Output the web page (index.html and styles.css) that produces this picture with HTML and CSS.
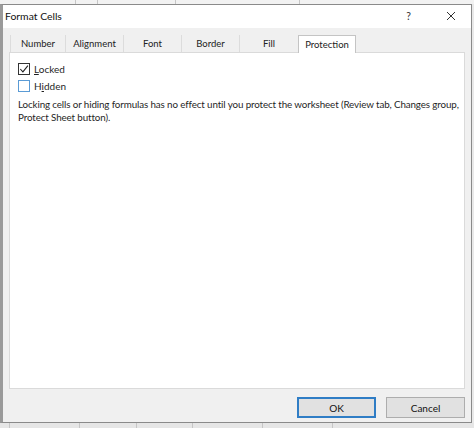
FILE: index.html
```html
<!DOCTYPE html>
<html>
<head>
<meta charset="utf-8">
<title>Format Cells</title>
<link rel="stylesheet" href="styles.css">
</head>
<body>
<div class="sheet-strip top">
  <span class="cell" style="width:76px"></span>
  <span class="cell" style="width:22px"></span>
  <span class="cell" style="width:78px"></span>
  <span class="cell" style="width:124px"></span>
</div>
<div class="dialog">
  <div class="titlebar">
    <span class="title">Format Cells</span>
    <div class="title-actions">
      <span class="help">?</span>
      <svg class="close" width="10" height="10" viewBox="0 0 10 10"><path d="M1 1 L9 9 M9 1 L1 9" stroke="#333" stroke-width="1" fill="none"/></svg>
    </div>
  </div>
  <div class="body">
    <div class="tabs">
      <span class="tab">Number</span>
      <span class="tab">Alignment</span>
      <span class="tab">Font</span>
      <span class="tab">Border</span>
      <span class="tab">Fill</span>
      <span class="tab active">Protection</span>
    </div>
    <div class="panel">
      <label class="check-row">
        <span class="box checked"><svg width="10" height="10" viewBox="0 0 10 10"><path d="M1.3 5 L3.9 7.8 L8.9 1.6" stroke="#222" stroke-width="1.1" fill="none"/></svg></span>
        <span><u>L</u>ocked</span>
      </label>
      <label class="check-row">
        <span class="box focus"></span>
        <span>H<u>i</u>dden</span>
      </label>
      <p class="note">Locking cells or hiding formulas has no effect until you protect the worksheet (Review tab, Changes group,<br>Protect Sheet button).</p>
    </div>
    <div class="footer">
      <button class="btn default">OK</button>
      <button class="btn">Cancel</button>
    </div>
  </div>
</div>
<div class="sheet-strip bottom">
  <span class="cell" style="width:10px"></span>
  <span class="cell" style="width:70px"></span>
  <span class="cell" style="width:57px"></span>
  <span class="cell" style="width:56px"></span>
  <span class="cell" style="width:70px"></span>
  <span class="cell" style="width:70px"></span>
</div>
</body>
</html>
```

FILE: styles.css
```css
* { box-sizing: border-box; }
html, body {
  margin: 0;
  padding: 0;
  width: 474px;
  height: 428px;
  overflow: hidden;
  background: #e9e9e9;
  font-family: Lato, "Noto Sans", sans-serif;
  font-size: 10px;
  color: #1f1f1f;
}
.sheet-strip {
  display: flex;
  height: 4px;
  background: #f2f2f2;
}
.sheet-strip.bottom { height: 6px; background: #e6e6e6; }
.cell {
  display: block;
  height: 100%;
  border-right: 1px solid #c6c6c6;
}
.dialog {
  width: 472px;
  height: 419px;
  border: 1px solid #8a8a8a;
  border-left: 3px solid #9a9a9a;
  background: #f0f0f0;
  display: flex;
  flex-direction: column;
}
.titlebar {
  height: 23px;
  background: #ffffff;
  display: flex;
  align-items: center;
  justify-content: space-between;
  padding: 0 15px 2px 2px;
}
.title {
  font-size: 10.4px;
  color: #111;
}
.title-actions {
  display: flex;
  align-items: center;
  gap: 35px;
}
.help {
  font-size: 10.5px;
  color: #333;
}
.close { display: block; }
.body {
  flex: 1;
  display: flex;
  flex-direction: column;
  padding: 6px 6px 0 6px;
}
.tabs {
  display: flex;
  align-items: flex-end;
  height: 18px;
  padding-left: 1px;
}
.tab {
  width: 58px;
  height: 17px;
  display: flex;
  align-items: center;
  justify-content: center;
  border-right: 1px solid #dcdcdc;
  font-size: 9.5px;
  color: #222;
}
.tab:first-child { width: 56px; border-left: 1px solid #dcdcdc; }
.tab:nth-child(5) { border-right: none; }
.tab.active {
  height: 18px;
  background: #fff;
  border: 1px solid #c4c4c4;
  border-bottom: none;
  position: relative;
  top: 1px;
  z-index: 1;
}
.panel {
  height: 337px;
  background: #ffffff;
  border: 1px solid #dadada;
  padding: 10px 4px 0 8px;
}
.check-row {
  display: flex;
  align-items: center;
  gap: 4px;
  height: 12px;
  margin-bottom: 5px;
  font-size: 10px;
}
.check-row u { text-decoration-thickness: 1px; text-underline-offset: 1px; }
.box {
  width: 12px;
  height: 12px;
  border: 1px solid #333;
  background: #fff;
  display: flex;
  align-items: center;
  justify-content: center;
}
.box.focus { border-color: #5b9bd5; }
.note {
  margin: 6px 0 0 0;
  font-size: 9.8px;
  letter-spacing: -0.12px;
  line-height: 13px;
  white-space: nowrap;
  color: #1f1f1f;
}
.footer {
  display: flex;
  justify-content: flex-end;
  gap: 10px;
  padding-top: 8px;
}
.btn {
  width: 79px;
  height: 21px;
  background: #e1e1e1;
  border: 1px solid #adadad;
  font-family: inherit;
  font-size: 10px;
  color: #111;
  padding: 0;
}
.btn.default {
  border: 2px solid #2f7dc5;
}
```
